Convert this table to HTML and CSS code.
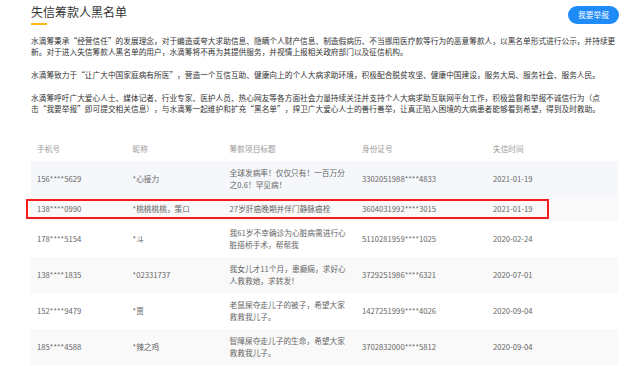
FILE: index.html
```html
<!DOCTYPE html>
<html lang="zh-CN">
<head>
<meta charset="utf-8">
<title>失信筹款人黑名单</title>
<link rel="stylesheet" href="styles.css">
</head>
<body>
<div class="page">
  <div class="head">
    <div class="title-block">
      <h1 class="title">失信筹款人黑名单</h1>
      <div class="title-bar"></div>
    </div>
    <button class="report-btn">我要举报</button>
  </div>
  <div class="intro">
    <p>水滴筹秉承“经营信任”的发展理念，对于编造或夸大求助信息、隐瞒个人财产信息、制造假病历、不当挪用医疗款等行为的恶意筹款人，以黑名单形式进行公示，并持续更<br>新。对于进入失信筹款人黑名单的用户，水滴筹将不再为其提供服务，并视情上报相关政府部门以及征信机构。</p>
    <p>水滴筹致力于“让广大中国家庭病有所医”，营造一个互信互助、健康向上的个人大病求助环境，积极配合脱贫攻坚、健康中国建设，服务大局、服务社会、服务人民。</p>
    <p>水滴筹呼吁广大爱心人士、媒体记者、行业专家、医护人员、热心网友等各方面社会力量持续关注并支持个人大病求助互联网平台工作，积极监督和举报不诚信行为（点<br>击“我要举报”即可提交相关信息），与水滴筹一起维护和扩充“黑名单”，捍卫广大爱心人士的善行善举，让真正陷入困境的大病患者能够看到希望，得到及时救助。</p>
  </div>
  <div class="table">
    <div class="row row-head">
      <div class="cell">手机号</div>
      <div class="cell">昵称</div>
      <div class="cell">筹款项目标题</div>
      <div class="cell">身份证号</div>
      <div class="cell">失信时间</div>
    </div>
    <div class="row row-hover">
      <div class="cell">156****5629</div>
      <div class="cell">*心接力</div>
      <div class="cell">全球发病率！仅仅只有！一百万分之0.6！罕见病！</div>
      <div class="cell">3302051988****4833</div>
      <div class="cell">2021-01-19</div>
    </div>
    <div class="row row-stripe">
      <div class="cell">138****0990</div>
      <div class="cell">*桃桃桃桃，策ロ</div>
      <div class="cell">27岁肝癌晚期并伴门静脉癌栓</div>
      <div class="cell">3604031992****3015</div>
      <div class="cell">2021-01-19</div>
    </div>
    <div class="row">
      <div class="cell">178****5154</div>
      <div class="cell">*斗</div>
      <div class="cell">我61岁不幸确诊为心脏病需进行心脏搭桥手术，帮帮我</div>
      <div class="cell">5110281959****1025</div>
      <div class="cell">2020-02-24</div>
    </div>
    <div class="row row-stripe">
      <div class="cell">138****1835</div>
      <div class="cell">*02331737</div>
      <div class="cell">我女儿才11个月，患癫痫，求好心人救救她，求转发！</div>
      <div class="cell">3729251986****6321</div>
      <div class="cell">2020-07-01</div>
    </div>
    <div class="row">
      <div class="cell">152****9479</div>
      <div class="cell">*贾</div>
      <div class="cell">老鼠屎夺走儿子的被子，希望大家救救我儿子。</div>
      <div class="cell">1427251999****4026</div>
      <div class="cell">2020-09-04</div>
    </div>
    <div class="row row-stripe">
      <div class="cell">185****4588</div>
      <div class="cell">*辣之鸡</div>
      <div class="cell">智障屎夺走儿子的生命，希望大家救救我儿子。</div>
      <div class="cell">3702832000****5812</div>
      <div class="cell">2020-09-04</div>
    </div>
    <div class="highlight"></div>
  </div>
</div>
</body>
</html>
```

FILE: styles.css
```css
html, body {
  margin: 0;
  padding: 0;
  background: #ffffff;
}

body {
  font-family: "Noto Sans CJK SC", "Noto Sans", sans-serif;
  color: #333333;
}

.page {
  padding: 6px 23px 0 31px;
  width: 587px;
}

.head {
  display: flex;
  justify-content: space-between;
  align-items: flex-start;
}

.title-block {
  display: flex;
  flex-direction: column;
}

.title {
  margin: 0;
  font-size: 12px;
  line-height: 12px;
  font-weight: normal;
  color: #333333;
}

.title-bar {
  margin-top: 5px;
  width: 16px;
  height: 2px;
  background: #fdb813;
}

.report-btn {
  margin-right: -1px;
  height: 18px;
  width: 51px;
  padding: 0;
  border: none;
  border-radius: 9px;
  background: #1f8bf7;
  color: #ffffff;
  font-family: "Noto Sans CJK SC", sans-serif;
  font-size: 7.7px;
  line-height: 18px;
}

.intro {
  margin-top: 11.4px;
  font-size: 7.7px;
  line-height: 10.6px;
  color: #333333;
  text-spacing-trim: space-all;
}

.intro p {
  margin: 0 0 12.5px 0;
}

.table {
  position: relative;
  margin-top: 23px;
  font-size: 7.7px;
  line-height: 12px;
  color: #666666;
}

.row {
  display: grid;
  grid-template-columns: 95.6px 97px 132.4px 131px 1fr;
  align-items: center;
}

.cell {
  padding: 6px 6px 6px 6px;
}

.row-head {
  color: #9a9a9a;
}

.row-hover {
  background: #f5f7fb;
}

.row-stripe {
  background: #f9f9f9;
}

.highlight {
  position: absolute;
  left: -5.3px;
  top: 62px;
  width: 519.3px;
  height: 16px;
  border: 2px solid #f41c1c;
}
```
